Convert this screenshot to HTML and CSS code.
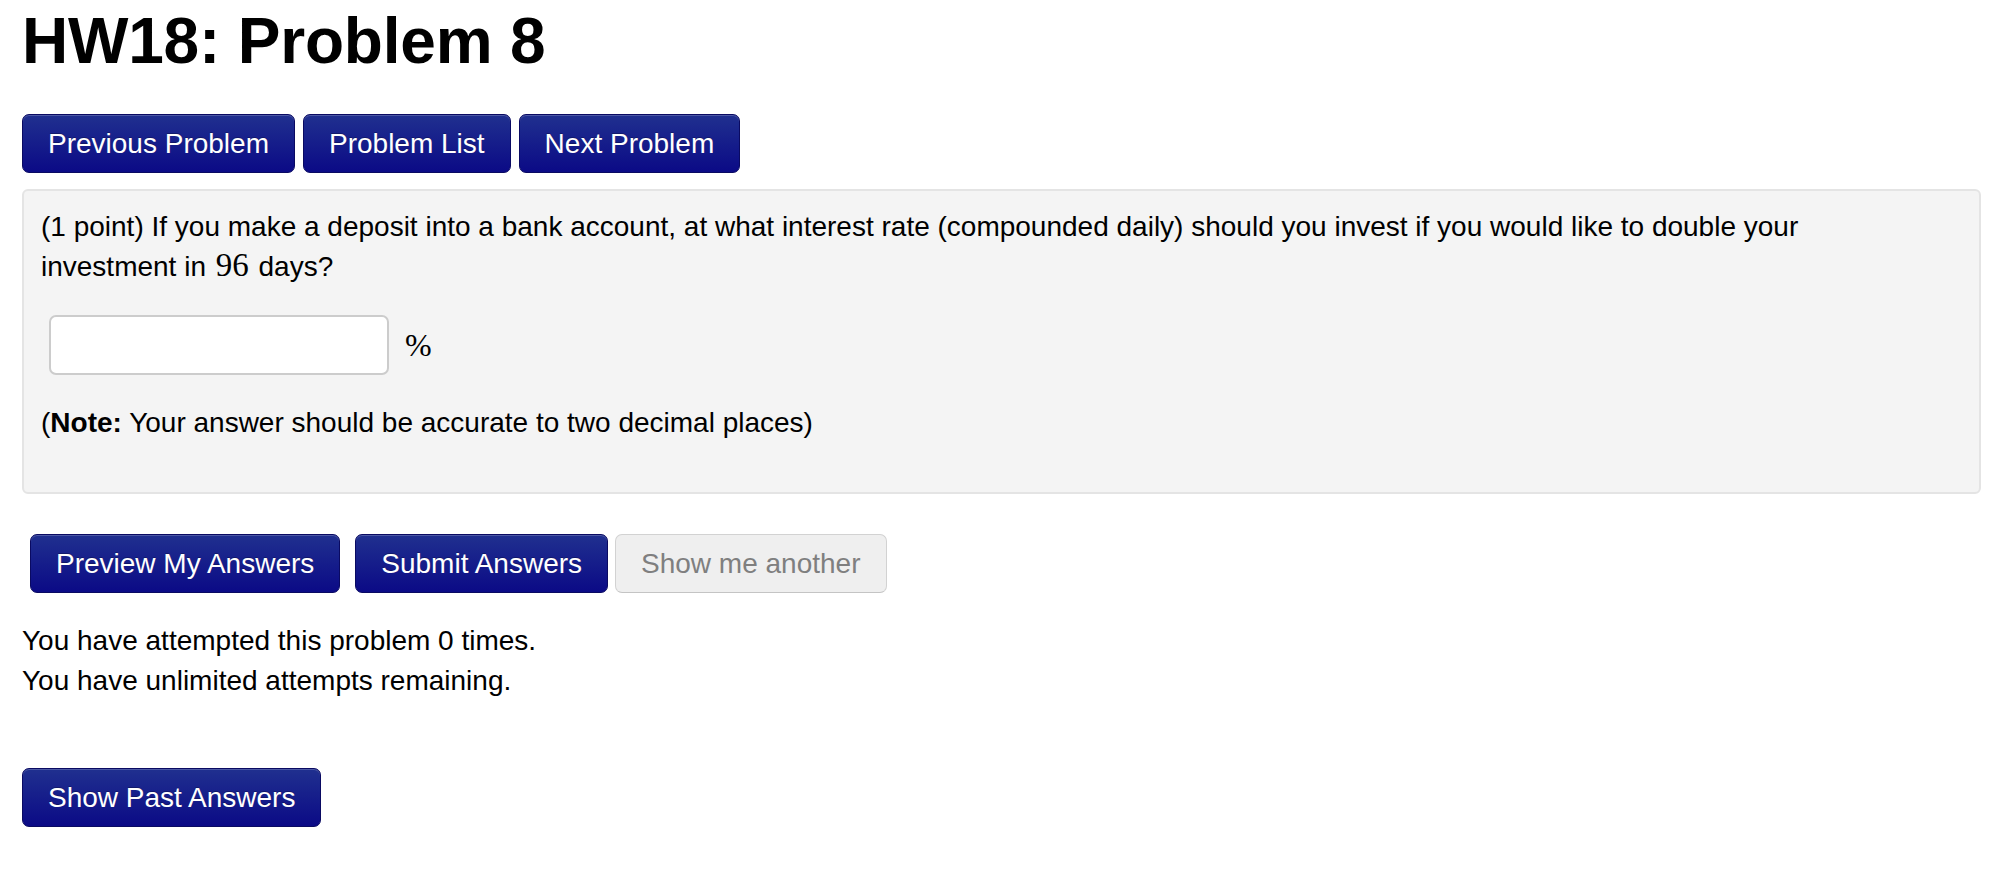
FILE: index.html
```html
<!DOCTYPE html>
<html lang="en">
<head>
<meta charset="utf-8">
<title>HW18: Problem 8</title>
<link rel="stylesheet" href="styles.css">
</head>
<body>
<div class="page">
  <h1 class="title">HW18: Problem 8</h1>
  <div class="nav-row">
    <button class="btn btn-primary">Previous Problem</button>
    <button class="btn btn-primary">Problem List</button>
    <button class="btn btn-primary">Next Problem</button>
  </div>
  <div class="well">
    <p class="question">(1 point) If you make a deposit into a bank account, at what interest rate (compounded daily) should you invest if you would like to double your investment in <span class="math">96</span> days?</p>
    <div class="answer-row">
      <input class="answer-input" type="text" aria-label="answer">
      <span class="math pct">%</span>
    </div>
    <p class="note">(<b>Note:</b> Your answer should be accurate to two decimal places)</p>
  </div>
  <div class="submit-row">
    <button class="btn btn-primary btn-preview">Preview My Answers</button>
    <button class="btn btn-primary">Submit Answers</button>
    <button class="btn btn-disabled">Show me another</button>
  </div>
  <div class="attempts">
    <p>You have attempted this problem 0 times.</p>
    <p>You have unlimited attempts remaining.</p>
  </div>
  <div class="past-row">
    <button class="btn btn-primary">Show Past Answers</button>
  </div>
</div>
</body>
</html>
```
FILE: styles.css
```css
html, body {
  margin: 0;
  padding: 0;
  background: #ffffff;
}

body {
  font-family: "Liberation Sans", Arial, Helvetica, sans-serif;
  font-size: 28px;
  line-height: 40px;
  color: #000000;
}

.page {
  padding: 0 22px;
}

.title {
  margin: 0;
  padding-top: 3px;
  font-size: 64px;
  line-height: 76px;
  font-weight: 700;
  letter-spacing: -0.2px;
}

.nav-row {
  display: flex;
  gap: 8px;
  margin-top: 35px;
}

.btn {
  font-family: "Liberation Sans", Arial, Helvetica, sans-serif;
  font-size: 28px;
  line-height: 57px;
  height: 59px;
  padding: 0 25px;
  border-radius: 7px;
  cursor: pointer;
  box-sizing: border-box;
}

.btn-primary {
  color: #ffffff;
  background: linear-gradient(#20308f, #0b0a86);
  border: 1px solid #0a0a62;
  box-shadow: inset 0 1px 0 rgba(255, 255, 255, 0.2);
  text-shadow: 0 -1px 0 rgba(0, 0, 0, 0.25);
}

.btn-disabled {
  color: #7f7f7f;
  background: #efefef;
  border: 1px solid #d2d2d2;
  border-bottom-color: #c4c4c4;
}

.well {
  margin-top: 16px;
  background: #f4f4f4;
  border: 2px solid #e4e4e4;
  border-radius: 6px;
  padding: 16px 17px 0 17px;
}

.question {
  margin: 0;
  max-width: 1870px;
}

.math {
  font-family: "Liberation Serif", "Times New Roman", serif;
  font-size: 33px;
  line-height: 0;
  padding: 0 2px;
}

.answer-row {
  display: flex;
  align-items: center;
  gap: 16px;
  margin: 28px 0 28px 8px;
}

.answer-input {
  width: 340px;
  height: 60px;
  box-sizing: border-box;
  border: 2px solid #cccccc;
  border-radius: 7px;
  background: #ffffff;
  font-size: 28px;
  padding: 0 12px;
}

.pct {
  font-size: 32px;
  line-height: 40px;
  padding: 0;
}

.note {
  margin: 0 0 49px 0;
}

.submit-row {
  display: flex;
  gap: 7px;
  margin-top: 40px;
  padding-left: 8px;
}

.btn-preview {
  margin-right: 8px;
}

.attempts {
  margin-top: 28px;
}

.attempts p {
  margin: 0;
}

.past-row {
  margin-top: 67px;
}
```
